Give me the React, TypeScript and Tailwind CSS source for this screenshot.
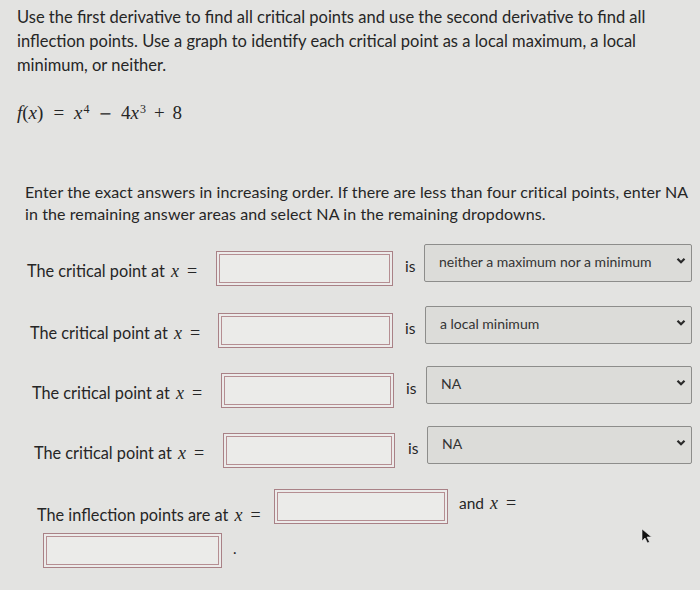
import React from 'react';

const Input = ({ w = 'w-[177px]' }: { w?: string }) => (
  <div className={`${w} h-[35px] bg-[#ebebe9] border border-[#a98186] shadow-[inset_0_0_0_2px_#ecebea,inset_0_0_0_3px_#b58e92]`} />
);

const X = () => <span className="font-['Liberation_Serif',serif] italic text-[18px] ml-[2px]">x</span>;
const Eq = () => <span className="font-['Liberation_Serif',serif] text-[18px] ml-[8px]">=</span>;

const Chevron = () => (
  <svg width="10" height="8" viewBox="0 0 10 8" className="mt-[-5px]">
    <path d="M1.5 1.8 L5 5.3 L8.5 1.8" fill="none" stroke="#2a2a2a" strokeWidth="2.2" />
  </svg>
);

const Select = ({ value, w }: { value: string; w: string }) => (
  <div className={`${w} h-[38px] bg-[#dcdcd9] border border-[#8d8d8b] rounded-[2px] flex items-center justify-between pl-[14px] pr-[5px] text-[14px] text-[#333]`}>
    <span className="mt-[-4px]">{value}</span>
    <Chevron />
  </div>
);

type Row = { pl: string; labelW: string; inputW: string; isMl: string; isW: string; selW: string; value: string };

const rows: Row[] = [
  { pl: 'pl-[27px]', labelW: 'w-[189px]', inputW: 'w-[177px]', isMl: 'ml-[12px]', isW: 'w-[19px]', selW: 'w-[268px]', value: 'neither a maximum nor a minimum' },
  { pl: 'pl-[30px]', labelW: 'w-[188px]', inputW: 'w-[175px]', isMl: 'ml-[12px]', isW: 'w-[20px]', selW: 'w-[267px]', value: 'a local minimum' },
  { pl: 'pl-[32px]', labelW: 'w-[189px]', inputW: 'w-[173px]', isMl: 'ml-[12px]', isW: 'w-[20px]', selW: 'w-[266px]', value: 'NA' },
  { pl: 'pl-[34px]', labelW: 'w-[189px]', inputW: 'w-[172px]', isMl: 'ml-[13px]', isW: 'w-[19px]', selW: 'w-[265px]', value: 'NA' },
];

export default function App() {
  return (
    <div className="relative w-[700px] h-[590px] overflow-hidden bg-[#e3e3e1] text-[#262626] font-['Lato','Open_Sans',sans-serif]">
      {/* Question text */}
      <div className="pl-[17px] pr-[30px] pt-[5px]">
        <p className="text-[16.5px] leading-[24px]">
          Use the first derivative to find all critical points and use the second derivative to find all
          inflection points. Use a graph to identify each critical point as a local maximum, a local
          minimum, or neither.
        </p>
        <p className="mt-[24px] font-['Liberation_Serif',serif] text-[19px] leading-[24px] whitespace-nowrap">
          <i>f</i>(<i>x</i>)<span className="mx-[10px]">=</span>
          <i>x</i>
          <sup className="text-[12px] ml-[1px]">4</sup>
          <span className="mx-[9px] font-['DejaVu_Serif',serif] text-[16px]">−</span>4<i>x</i>
          <sup className="text-[12px] ml-[1px]">3</sup>
          <span className="mx-[8px]">+</span>8
        </p>
      </div>

      <div className="pl-[25px] mt-[55px] text-[16px] leading-[22px] tracking-[0.1px] whitespace-nowrap">
        <p>Enter the exact answers in increasing order. If there are less than four critical points, enter NA</p>
        <p>in the remaining answer areas and select NA in the remaining dropdowns.</p>
      </div>

      {/* Critical point rows */}
      <div className="mt-[19px] flex flex-col">
        {rows.map((r, i) => (
          <div key={i} className={`flex items-start ${i === 0 ? 'h-[62px]' : 'h-[60px]'} ${r.pl}`}>
            <div className={`${r.labelW} mt-[16px] text-[16.3px] leading-[22px] whitespace-nowrap`}>
              The critical point at <X />
              <Eq />
            </div>
            <div className="mt-[7px]">
              <Input w={r.inputW} />
            </div>
            <div className={`${r.isMl} ${r.isW} mt-[12px] text-[15.5px] leading-[20px]`}>is</div>
            <Select value={r.value} w={r.selW} />
          </div>
        ))}
      </div>

      {/* Inflection points */}
      <div className="flex items-start pl-[37px] mt-[3px]">
        <div className="w-[237px] mt-[15px] text-[16.3px] leading-[22px] whitespace-nowrap">
          The inflection points are at <X />
          <Eq />
        </div>
        <Input w="w-[174px]" />
        <div className="ml-[11px] mt-[3px] text-[15.5px] leading-[22px] whitespace-nowrap">
          and <X />
          <Eq />
        </div>
      </div>
      <div className="flex items-end pl-[43px] mt-[7px]">
        <Input w="w-[179px]" />
        <span className="ml-[11px] mb-[9px] text-[15px]">.</span>
      </div>

      {/* Mouse cursor */}
      <svg className="absolute left-[641px] top-[528px]" width="12" height="16" viewBox="0 0 12 16">
        <path d="M1 1 L1 13 L4 10 L6.5 15 L8.5 14 L6 9 L10.5 9 Z" fill="#111" stroke="#eee" strokeWidth="0.6" />
      </svg>
    </div>
  );
}
